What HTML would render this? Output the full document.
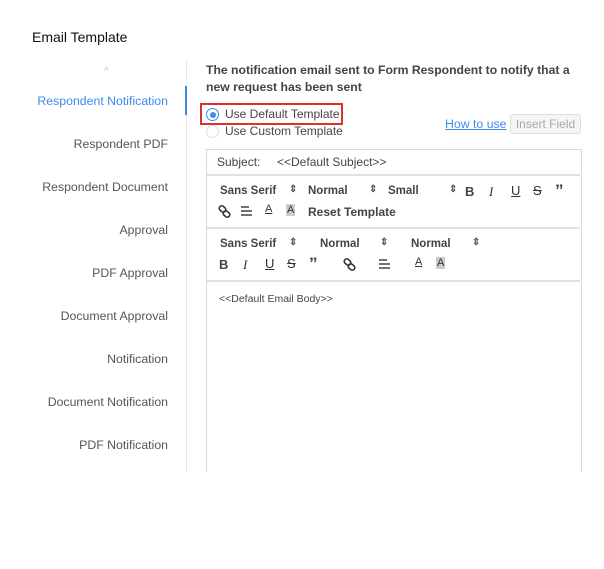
<!DOCTYPE html>
<html><head><meta charset="utf-8"><style>
*{margin:0;padding:0;box-sizing:border-box}
body{width:604px;height:569px;background:#fff;font-family:"Liberation Sans",Arial,sans-serif;position:relative;overflow:hidden;color:#333}
.a{position:absolute;white-space:nowrap}
.nav{right:436px;font-size:12.3px;color:#555}
.t{font-size:12px;color:#333}
.b{font-weight:bold;color:#444}
.ar{font-size:10px;color:#555;font-weight:bold}
.hr{position:absolute;left:207px;width:373px;height:2px;background:#e2e2e2}
</style></head><body>
<div class="a" style="left:32px;top:29px;font-size:14px;color:#111">Email Template</div>
<div class="a" style="left:104px;top:66px;font-size:10px;color:#bbb">^</div>
<div class="a" style="left:186px;top:60px;width:1px;height:412px;background:#e8e8e8"></div>
<div class="a" style="left:185px;top:86px;width:2px;height:29px;background:#3d8bf0"></div>
<div class="a nav" style="top:94px;color:#3d8bf0">Respondent Notification</div>
<div class="a nav" style="top:137px">Respondent PDF</div>
<div class="a nav" style="top:180px">Respondent Document</div>
<div class="a nav" style="top:223px">Approval</div>
<div class="a nav" style="top:266px">PDF Approval</div>
<div class="a nav" style="top:309px">Document Approval</div>
<div class="a nav" style="top:352px">Notification</div>
<div class="a nav" style="top:395px">Document Notification</div>
<div class="a nav" style="top:438px">PDF Notification</div>

<div class="a b" style="left:206px;top:62px;font-size:12.2px;color:#444;line-height:17px;white-space:normal;width:372px">The notification email sent to Form Respondent to notify that a new request has been sent</div>
<div class="a" style="left:200px;top:103px;width:143px;height:22px;border:2px solid #e0302a"></div>
<div class="a" style="left:206px;top:108px;width:13px;height:13px;border:1px solid #3d8bf0;border-radius:50%"></div>
<div class="a" style="left:209.5px;top:111.5px;width:6px;height:6px;background:#3d8bf0;border-radius:50%"></div>
<div class="a t" style="left:225px;top:107px;color:#444">Use Default Template</div>
<div class="a" style="left:206px;top:125px;width:13px;height:13px;border:1px solid #ddd;border-radius:50%"></div>
<div class="a t" style="left:225px;top:124px;color:#444">Use Custom Template</div>
<div class="a" style="left:445px;top:117px;font-size:12.3px;color:#3d8bf0;text-decoration:underline">How to use</div>
<div class="a" style="left:510px;top:114px;width:71px;height:20px;border:1px solid #ddd;border-radius:3px;background:#f5f5f5;color:#aaa;font-size:12px;text-align:center;line-height:18px">Insert Field</div>

<div class="a" style="left:206px;top:149px;width:376px;height:323px;border:1px solid #d8d8d8;border-bottom:none"></div>
<div class="a t" style="left:217px;top:155px;color:#444">Subject:</div>
<div class="a t" style="left:277px;top:155px;color:#444">&lt;&lt;Default Subject&gt;&gt;</div>
<div class="hr" style="top:174px"></div>
<div class="a b" style="left:220px;top:185px;font-size:11.5px">Sans Serif</div>
<div class="a ar" style="left:289px;top:184px">⇕</div>
<div class="a b" style="left:308px;top:185px;font-size:11.5px">Normal</div>
<div class="a ar" style="left:369px;top:184px">⇕</div>
<div class="a b" style="left:388px;top:185px;font-size:11.5px">Small</div>
<div class="a ar" style="left:449px;top:184px">⇕</div>
<div class="a b" style="left:465px;top:184px;font-size:13px">B</div>
<div class="a" style="left:489px;top:184px;font-size:13px;font-style:italic;font-family:'Liberation Serif',serif">I</div>
<div class="a" style="left:511px;top:183px;font-size:13px;text-decoration:underline">U</div>
<div class="a" style="left:533px;top:183px;font-size:13px;text-decoration:line-through">S</div>
<div class="a b" style="left:555px;top:181px;font-size:17px">”</div>
<svg class="a" style="left:218px;top:205px" width="13" height="13" viewBox="0 0 13 13"><g fill="none" stroke="#333" stroke-width="1.6"><rect x="1" y="1.5" width="7" height="5" rx="2.5" transform="rotate(40 4.5 4)"/><rect x="5" y="6.5" width="7" height="5" rx="2.5" transform="rotate(40 8.5 9)"/></g></svg>
<svg class="a" style="left:240px;top:205px" width="13" height="12"><g stroke="#333" stroke-width="1.4"><line x1="1" y1="2" x2="9" y2="2"/><line x1="1" y1="6" x2="12" y2="6"/><line x1="1" y1="10" x2="12" y2="10"/></g></svg>
<div class="a" style="left:265px;top:203px;font-size:11px;text-decoration:underline">A</div>
<div class="a" style="left:286px;top:204px;font-size:11px;background:#ccc;padding:0 1px">A</div>
<div class="a b" style="left:308px;top:205px;font-size:12px">Reset Template</div>
<div class="hr" style="top:227px"></div>
<div class="a b" style="left:220px;top:238px;font-size:11.5px">Sans Serif</div>
<div class="a ar" style="left:289px;top:237px">⇕</div>
<div class="a b" style="left:320px;top:238px;font-size:11.5px">Normal</div>
<div class="a ar" style="left:380px;top:237px">⇕</div>
<div class="a b" style="left:411px;top:238px;font-size:11.5px">Normal</div>
<div class="a ar" style="left:472px;top:237px">⇕</div>
<div class="a b" style="left:219px;top:257px;font-size:13px">B</div>
<div class="a" style="left:243px;top:257px;font-size:13px;font-style:italic;font-family:'Liberation Serif',serif">I</div>
<div class="a" style="left:265px;top:256px;font-size:13px;text-decoration:underline">U</div>
<div class="a" style="left:287px;top:256px;font-size:13px;text-decoration:line-through">S</div>
<div class="a b" style="left:309px;top:254px;font-size:17px">”</div>
<svg class="a" style="left:343px;top:258px" width="13" height="13" viewBox="0 0 13 13"><g fill="none" stroke="#333" stroke-width="1.6"><rect x="1" y="1.5" width="7" height="5" rx="2.5" transform="rotate(40 4.5 4)"/><rect x="5" y="6.5" width="7" height="5" rx="2.5" transform="rotate(40 8.5 9)"/></g></svg>
<svg class="a" style="left:378px;top:258px" width="13" height="12"><g stroke="#333" stroke-width="1.4"><line x1="1" y1="2" x2="9" y2="2"/><line x1="1" y1="6" x2="12" y2="6"/><line x1="1" y1="10" x2="12" y2="10"/></g></svg>
<div class="a" style="left:415px;top:256px;font-size:11px;text-decoration:underline">A</div>
<div class="a" style="left:436px;top:257px;font-size:11px;background:#ccc;padding:0 1px">A</div>
<div class="hr" style="top:280px"></div>
<div class="a" style="left:219px;top:293px;font-size:10.5px;color:#444">&lt;&lt;Default Email Body&gt;&gt;</div>
</body></html>
